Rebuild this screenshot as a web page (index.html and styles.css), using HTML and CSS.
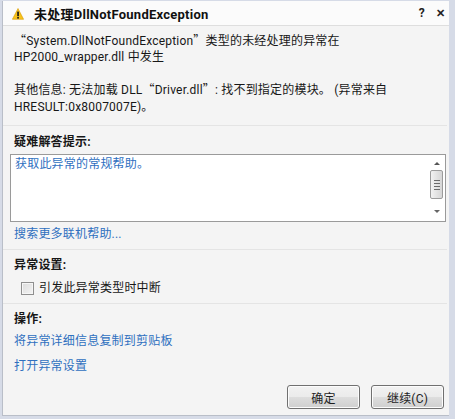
FILE: index.html
```html
<!DOCTYPE html>
<html lang="zh-CN">
<head>
<meta charset="utf-8">
<title>未处理DllNotFoundException</title>
<link rel="stylesheet" href="styles.css">
</head>
<body>
<div class="window">
  <div class="titlebar">
    <svg class="warn" width="12" height="12" viewBox="0 0 12 12">
      <path d="M6 0.5 L11.6 11.3 L0.4 11.3 Z" fill="#f7c21b" stroke="#d69a00" stroke-width="0.6" stroke-linejoin="round"/>
      <rect x="5.2" y="3.6" width="1.7" height="4.6" fill="#1a1a1a"/>
      <rect x="5.2" y="9" width="1.7" height="1.6" fill="#1a1a1a"/>
    </svg>
    <span class="title">未处理DllNotFoundException</span>
    <span class="tb-btn help">?</span>
    <span class="tb-btn close">✕</span>
  </div>
  <div class="content">
    <div class="message">
      <p class="msg1"><span class="q">“</span>System.DllNotFoundException<span class="q">”</span>类型的未经处理的异常在<br>HP2000_wrapper.dll 中发生</p>
      <p class="msg2">其他信息: 无法加载 DLL<span class="q">“</span>Driver.dll<span class="q">”</span>: 找不到指定的模块。 (异常来自<br>HRESULT:0x8007007E)。</p>
    </div>
    <div class="section tips">
      <div class="heading">疑难解答提示:</div>
      <div class="textbox">
        <div class="tb-text link">获取此异常的常规帮助。</div>
        <div class="scrollbar">
          <span class="arrow up"></span>
          <span class="thumb"><i></i><i></i><i></i><i></i></span>
          <span class="arrow down"></span>
        </div>
      </div>
      <div class="link more">搜索更多联机帮助...</div>
    </div>
    <div class="section settings">
      <div class="heading">异常设置:</div>
      <label class="check"><span class="box"></span>引发此异常类型时中断</label>
    </div>
    <div class="section actions">
      <div class="heading">操作:</div>
      <div class="link act act-first">将异常详细信息复制到剪贴板</div>
      <div class="link act act-second">打开异常设置</div>
    </div>
    <div class="buttons">
      <button class="btn">确定</button>
      <button class="btn">继续(C)</button>
    </div>
  </div>
</div>
</body>
</html>
```
FILE: styles.css
```css
html, body {
  margin: 0;
  padding: 0;
  width: 455px;
  height: 419px;
  overflow: hidden;
  background: #d6dbe7;
}
body {
  font-family: "Roboto", "Noto Sans CJK SC", sans-serif;
  font-size: 12px;
  letter-spacing: 0.2px;
  color: #171717;
}
.window {
  margin: 1px 6px 0 2px;
  height: 415px;
  display: flex;
  flex-direction: column;
  background: #f4f4f4;
  border-left: 1px solid #b9bec8;
  border-bottom: 1px solid #b9bec8;
  box-sizing: border-box;
}
.titlebar {
  height: 24px;
  flex: none;
  display: flex;
  align-items: center;
  background: #fbfbfb;
  border-bottom: 1px solid #dedede;
  padding-left: 9px;
}
.warn { margin-top: 1px; }
.title {
  margin-left: 10px;
  font-weight: bold;
  font-size: 13px;
  letter-spacing: 0.25px;
  color: #111;
}
.tb-btn {
  font-size: 12px;
  color: #222;
  font-weight: bold;
}
.help { margin-left: auto; margin-right: 11px; }
.close { margin-right: 4px; font-size: 11px; }
.content {
  flex: 1;
  display: flex;
  flex-direction: column;
}
p { margin: 0; }
.q { font-family: "Noto Sans CJK SC", sans-serif; line-height: 1px; }
.message {
  padding: 7px 10px 9px 11px;
  border-bottom: 1px solid #e4e4e4;
  margin-right: 2px;
}
.msg1 { line-height: 16px; }
.msg2 { margin-top: 17px; line-height: 17px; }
.section {
  padding: 7px 0 0 11px;
  border-bottom: 1px solid #e4e4e4;
  margin-right: 2px;
}
.heading {
  font-weight: bold;
  line-height: 18px;
}
.link { color: #2f70bf; }
.textbox {
  margin: 3px 1px 0 -4px;
  height: 66px;
  background: #fff;
  border: 1px solid #9a9a9a;
  display: flex;
}
.tb-text {
  flex: 1;
  padding: 1px 4px;
  line-height: 16px;
}
.scrollbar {
  width: 17px;
  display: flex;
  flex-direction: column;
  align-items: center;
  padding: 3px 0 2px;
}
.arrow {
  width: 0; height: 0;
  border-left: 3px solid transparent;
  border-right: 3px solid transparent;
}
.arrow.up { border-bottom: 3px solid #555; margin-top: 4px; }
.arrow.down { border-top: 3px solid #666; margin-top: auto; margin-bottom: 6px; }
.thumb {
  margin-top: 5px;
  width: 13px;
  height: 29px;
  box-sizing: border-box;
  border: 1px solid #9c9c9c;
  border-radius: 2px;
  background: linear-gradient(to right, #f2f2f2, #e2e2e2 55%, #d6d6d6);
  display: flex;
  flex-direction: column;
  align-items: center;
  justify-content: center;
  gap: 2px;
}
.thumb i {
  display: block;
  width: 6px;
  height: 1px;
  background: #6a6a6a;
}
.more {
  line-height: 16px;
  padding: 4px 0 7px;
}
.settings { padding-top: 6px; }
.check {
  display: flex;
  align-items: center;
  line-height: 20px;
  padding: 4px 0 5px 7px;
}
.box {
  width: 11px; height: 11px;
  border: 1px solid #8f8f8f;
  background: linear-gradient(135deg, #dcdcdc, #f4f4f4);
  box-shadow: inset 0 0 0 1px #f6f6f6;
  margin-right: 5px;
}
.actions {
  border-bottom: none;
  padding-top: 6px;
}
.act { line-height: 16px; }
.act-first { margin-top: 5px; }
.act-second { margin-top: 9px; }
.buttons {
  margin-top: auto;
  display: flex;
  justify-content: flex-end;
  gap: 11px;
  padding: 0 5px 6px 0;
}
.btn {
  width: 73px;
  height: 24px;
  font-family: inherit;
  font-size: 12px;
  letter-spacing: inherit;
  color: #1e1e1e;
  border: 1px solid #707070;
  border-radius: 3px;
  background: linear-gradient(#f2f2f2 0%, #ebebeb 48%, #dddddd 52%, #cfcfcf 100%);
  box-shadow: inset 0 0 0 1px #fcfcfc;
  padding: 0;
}
```
